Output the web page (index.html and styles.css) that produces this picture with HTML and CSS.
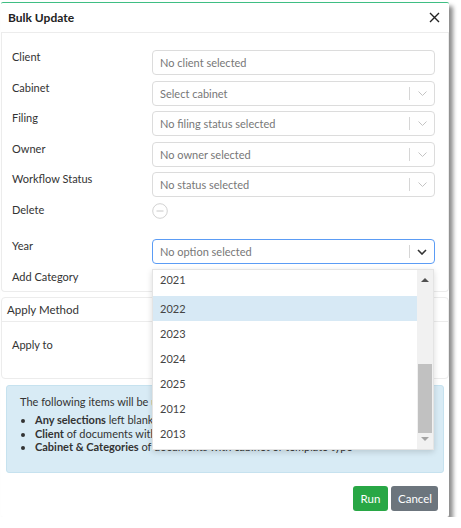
FILE: index.html
```html
<!DOCTYPE html>
<html lang="en">
<head>
  <meta charset="UTF-8" />
  <meta name="viewport" content="width=device-width, initial-scale=1.0" />
  <title>Bulk Update</title>
  <link rel="stylesheet" href="styles.css">
</head>
<body>

  <div class="modal">
    <div class="modal-header">
      <h5>Bulk Update</h5>
      <button class="close" type="button">
        <svg width="11" height="11" viewBox="0 0 11 11"><path d="M1 1 L10 10 M10 1 L1 10" stroke="#222" stroke-width="1.4" fill="none"/></svg>
      </button>
    </div>

    <div class="card fields">
      <div class="row">
        <label>Client</label>
        <div class="select plain"><span class="value">No client selected</span></div>
      </div>
      <div class="row">
        <label>Cabinet</label>
        <div class="select"><span class="value">Select cabinet</span><span class="sep"></span><span class="arrow"><svg width="9" height="5" viewBox="0 0 9 5"><path d="M0.5 0.5 L4.5 4.5 L8.5 0.5" stroke="#c4c4c4" fill="none"/></svg></span></div>
      </div>
      <div class="row">
        <label>Filing</label>
        <div class="select"><span class="value">No filing status selected</span><span class="sep"></span><span class="arrow"><svg width="9" height="5" viewBox="0 0 9 5"><path d="M0.5 0.5 L4.5 4.5 L8.5 0.5" stroke="#c4c4c4" fill="none"/></svg></span></div>
      </div>
      <div class="row">
        <label>Owner</label>
        <div class="select"><span class="value">No owner selected</span><span class="sep"></span><span class="arrow"><svg width="9" height="5" viewBox="0 0 9 5"><path d="M0.5 0.5 L4.5 4.5 L8.5 0.5" stroke="#c4c4c4" fill="none"/></svg></span></div>
      </div>
      <div class="row">
        <label>Workflow Status</label>
        <div class="select"><span class="value">No status selected</span><span class="sep"></span><span class="arrow"><svg width="9" height="5" viewBox="0 0 9 5"><path d="M0.5 0.5 L4.5 4.5 L8.5 0.5" stroke="#c4c4c4" fill="none"/></svg></span></div>
      </div>
      <div class="row row-delete">
        <label>Delete</label>
        <div>
          <svg width="16" height="16" viewBox="0 0 16 16"><circle cx="8" cy="8" r="7.3" stroke="#d2d2d2" stroke-width="1" fill="#fff"/><path d="M4.5 8 H11.5" stroke="#c8c8c8" stroke-width="1"/></svg>
        </div>
      </div>
      <div class="row">
        <label>Year</label>
        <div class="year-wrap">
          <div class="select focused"><span class="value">No option selected</span><span class="sep"></span><span class="arrow"><svg width="10" height="6" viewBox="0 0 10 6"><path d="M1 1 L5 5 L9 1" stroke="#333" stroke-width="1.6" fill="none"/></svg></span></div>
          <div class="dropdown">
            <ul class="dd-list">
              <li>2021</li>
              <li class="active">2022</li>
              <li>2023</li>
              <li>2024</li>
              <li>2025</li>
              <li>2012</li>
              <li>2013</li>
            </ul>
            <div class="scrollbar">
              <span class="sb-up"></span>
              <span class="sb-thumb"></span>
              <span class="sb-down"></span>
            </div>
          </div>
        </div>
      </div>
      <div class="row row-last">
        <label>Add Category</label>
        <div></div>
      </div>
    </div>

    <div class="card method">
      <div class="card-header">Apply Method</div>
      <div class="card-body">
        <label>Apply to</label>
      </div>
    </div>

    <div class="alert">
      <p>The following items will be unaffected:</p>
      <ul>
        <li><b>Any selections</b> left blank</li>
        <li><b>Client</b> of documents with Completed status</li>
        <li><b>Cabinet &amp; Categories</b> of documents with cabinet or template type</li>
      </ul>
    </div>

    <div class="modal-footer">
      <button class="btn btn-run" type="button">Run</button>
      <button class="btn btn-cancel" type="button">Cancel</button>
    </div>
  </div>

</body>
</html>
```

FILE: styles.css
```css
body {
  margin: 0;
  font-family: Lato, "Liberation Sans", sans-serif;
  font-size: 11px;
  color: #333;
  background: #fff;
}
.modal {
  position: relative;
  width: 448px;
  margin: 2px 0 0 1px;
  background: #fff;
  border-top: 1px solid #3fbe83;
  border-radius: 2px;
  box-shadow: 4px 4px 4px rgba(0, 0, 0, 0.45);
}
.modal-header {
  display: flex;
  justify-content: space-between;
  align-items: center;
  height: 29px;
  padding: 0 9px 0 7px;
  border-bottom: 1px solid #ececec;
}
.modal-header h5 {
  margin: 0;
  font-size: 12px;
  font-weight: 700;
  color: #222;
}
.close {
  border: none;
  background: none;
  padding: 0;
  display: flex;
}
.card {
  border: 1px solid #ececec;
  border-radius: 4px;
}
.fields {
  border-top: none;
  border-radius: 0 0 4px 4px;
  padding: 17px 13px 0 10px;
  height: 241px;
}
.row {
  display: grid;
  grid-template-columns: 140px 1fr;
  margin-bottom: 5.5px;
}
.row label, .card-body label {
  line-height: 14px;
  color: #333;
}
.row-delete {
  height: 31px;
}
.row-last {
  height: 20px;
  margin-bottom: 0;
}
.select {
  display: flex;
  align-items: center;
  height: 23px;
  border: 1px solid #dcdcdc;
  border-radius: 4px;
  padding-left: 7px;
  background: #fff;
}
.select .value {
  flex: 1;
  color: #777;
}
.select .sep {
  width: 1px;
  height: 13px;
  background: #d6d6d6;
}
.select .arrow {
  width: 24px;
  display: flex;
  justify-content: center;
}
.select.focused {
  border-color: #5b9cf5;
}
.year-wrap {
  position: relative;
}
.dropdown {
  position: absolute;
  top: 30px;
  left: 0;
  width: 280px;
  height: 179px;
  background: #fff;
  border: 1px solid #e4e4e4;
  box-shadow: 0 2px 6px rgba(0, 0, 0, 0.15);
  overflow: hidden;
  z-index: 5;
}
.dd-list {
  list-style: none;
  margin: 0;
  padding: 0 16px 0 0;
}
.dd-list li {
  height: 25px;
  line-height: 25px;
  padding-left: 7px;
  color: #444;
  font-size: 11px;
}
.dd-list li:first-child {
  height: 26px;
  line-height: 20px;
}
.dd-list li.active {
  background: #d7e9f5;
}
.scrollbar {
  position: absolute;
  top: 0;
  right: 0;
  width: 16px;
  height: 100%;
  background: #f1f1f1;
}
.sb-up, .sb-down {
  position: absolute;
  left: 4px;
  width: 0;
  height: 0;
  border-left: 4px solid transparent;
  border-right: 4px solid transparent;
}
.sb-up {
  top: 8px;
  border-bottom: 4px solid #505050;
}
.sb-down {
  bottom: 8px;
  border-top: 4px solid #a3a3a3;
}
.sb-thumb {
  position: absolute;
  left: 1px;
  right: 1px;
  top: 94px;
  height: 69px;
  background: #c1c1c1;
}
.method {
  margin-top: 5px;
}
.card-header {
  height: 23px;
  line-height: 23px;
  padding-left: 5px;
  border-bottom: 1px solid #ececec;
  font-size: 11.5px;
  color: #333;
}
.card-body {
  height: 40px;
  padding: 16px 10px 0;
}
.alert {
  margin: 6px 5px 0 5px;
  padding: 9px 13px 18px;
  background: #d8ebf5;
  border: 1px solid #c6e2ef;
  border-radius: 3px;
  color: #333;
}
.alert p {
  margin: 0 0 4px;
  line-height: 14px;
}
.alert ul {
  margin: 0;
  padding-left: 15px;
}
.alert li {
  line-height: 13.5px;
}
.alert b {
  font-weight: 700;
}
.modal-footer {
  display: flex;
  justify-content: flex-end;
  gap: 3px;
  padding: 13px 11px 6px 0;
}
.btn {
  height: 25px;
  border: none;
  border-radius: 3px;
  color: #fff;
  font-family: Lato, "Liberation Sans", sans-serif;
  font-size: 11.5px;
  padding: 0 7px;
}
.btn-run {
  background: #28a745;
  width: 35px;
}
.btn-cancel {
  background: #6c757d;
  width: 47px;
}
```
